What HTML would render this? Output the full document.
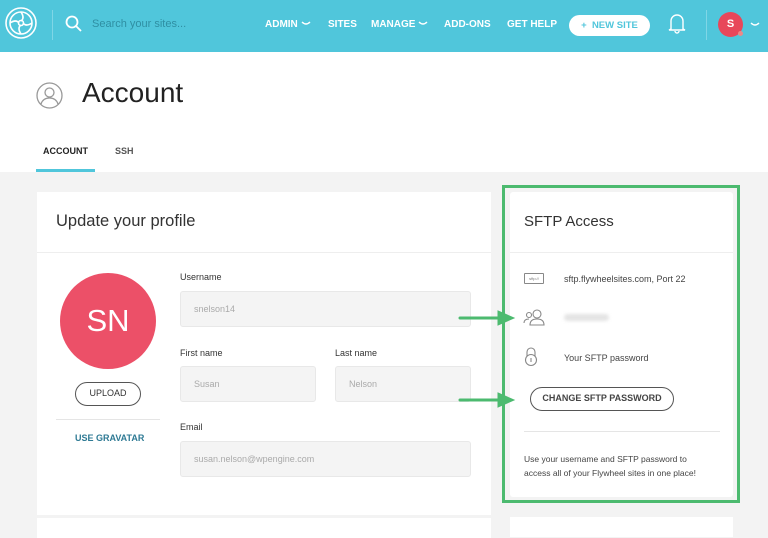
<!DOCTYPE html>
<html><head><meta charset="utf-8"><style>
*{box-sizing:border-box;margin:0;padding:0}
body{width:768px;height:527px;overflow:hidden;background:#f3f3f3;font-family:"Liberation Sans",sans-serif;position:relative;color:#333}
.a{position:absolute}
.hdr{left:0;top:0;width:768px;height:52px;background:#50c6db}
.nav{color:#fff;font-size:10px;font-weight:bold;top:19px;white-space:nowrap}
.nav svg{vertical-align:middle;margin-left:3px}
.lbl{font-size:9px;color:#333}
.in{background:#f4f4f4;border:1px solid #e8e8e8;border-radius:3px;font-size:9px;color:#aaa;padding-left:13px;display:flex;align-items:center}
</style></head><body>
<div class="a hdr"></div>
<svg class="a" style="left:3px;top:5px" width="36" height="36" viewBox="0 0 36 36" fill="none" stroke="#fff" stroke-width="1.6"><circle cx="18" cy="18" r="15"/><circle cx="18" cy="18" r="11"/><circle cx="18" cy="18" r="2.5"/><path d="M18 7q4 6 0 9M29 18q-6 4-9 0M18 29q-4-6 0-9M7 18q6-4 9 0"/></svg>
<div class="a" style="left:52px;top:10px;width:1px;height:30px;background:#7fd6e6"></div>
<svg class="a" style="left:65px;top:15px" width="17" height="17" viewBox="0 0 17 17" fill="none" stroke="#fff" stroke-width="1.8"><circle cx="7" cy="7" r="5.5"/><path d="M11 11l5 5"/></svg>
<div class="a" style="left:92px;top:18px;font-size:11px;color:#2f8fa3">Search your sites...</div>
<div class="a nav" style="left:265px">ADMIN<svg width="10" height="6" viewBox="0 0 10 6" fill="none" stroke="#fff" stroke-width="1.4"><path d="M1 1q4 4 8 0"/></svg></div>
<div class="a nav" style="left:328px">SITES</div>
<div class="a nav" style="left:371px">MANAGE<svg width="10" height="6" viewBox="0 0 10 6" fill="none" stroke="#fff" stroke-width="1.4"><path d="M1 1q4 4 8 0"/></svg></div>
<div class="a nav" style="left:444px">ADD-ONS</div>
<div class="a nav" style="left:507px">GET HELP</div>
<div class="a" style="left:569px;top:15px;width:81px;height:21px;background:#fff;border-radius:11px;color:#50c6db;font-size:9.5px;font-weight:bold;text-align:center;line-height:21px">+&nbsp; NEW SITE</div>
<svg class="a" style="left:668px;top:12px" width="18" height="22" viewBox="0 0 18 22" fill="none" stroke="#fff" stroke-width="1.4"><path d="M3 17V9a6 6 0 0 1 12 0v8l2 1H1z M7 19a2 2 0 0 0 4 0"/></svg>
<div class="a" style="left:706px;top:10px;width:1px;height:30px;background:#7fd6e6"></div>
<div class="a" style="left:718px;top:12px;width:25px;height:25px;border-radius:50%;background:#e8475a;color:#fff;font-size:11px;font-weight:bold;text-align:center;line-height:25px">S</div>
<div class="a" style="left:738px;top:31px;width:5px;height:5px;border-radius:50%;background:#e88;"></div>
<svg class="a" style="left:750px;top:22px" width="10" height="6" viewBox="0 0 10 6" fill="none" stroke="#fff" stroke-width="1.4"><path d="M1 1q4 4 8 0"/></svg>

<div class="a" style="left:0;top:52px;width:768px;height:120px;background:#fff"></div>
<svg class="a" style="left:36px;top:82px" width="27" height="27" viewBox="0 0 27 27" fill="none" stroke="#999" stroke-width="1.3"><circle cx="13.5" cy="13.5" r="12.5"/><circle cx="13.5" cy="10.5" r="4.5"/><path d="M5 22q2-6 8.5-6t8.5 6"/></svg>
<div class="a" style="left:82px;top:77px;font-size:28px;color:#222">Account</div>
<div class="a" style="left:43px;top:146px;font-size:9px;font-weight:bold;color:#222">ACCOUNT</div>
<div class="a" style="left:115px;top:146px;font-size:9px;font-weight:bold;color:#555">SSH</div>
<div class="a" style="left:36px;top:169px;width:59px;height:3px;background:#50c6db"></div>

<div class="a" style="left:37px;top:192px;width:454px;height:323px;background:#fff"></div>
<div class="a" style="left:37px;top:518px;width:454px;height:20px;background:#fff"></div>
<div class="a" style="left:56px;top:212px;font-size:16.5px;color:#333">Update your profile</div>
<div class="a" style="left:37px;top:252px;width:454px;height:1px;background:#eee"></div>
<div class="a" style="left:60px;top:273px;width:96px;height:96px;border-radius:50%;background:#ec5068;color:#fff;font-size:31px;text-align:center;line-height:96px">SN</div>
<div class="a" style="left:75px;top:382px;width:66px;height:24px;border:1.5px solid #555;border-radius:12px;font-size:9px;text-align:center;line-height:21px;color:#333">UPLOAD</div>
<div class="a" style="left:56px;top:419px;width:104px;height:1px;background:#e5e5e5"></div>
<div class="a" style="left:75px;top:433px;font-size:9px;font-weight:bold;color:#2e7a94">USE GRAVATAR</div>
<div class="a lbl" style="left:180px;top:272px">Username</div>
<div class="a in" style="left:180px;top:291px;width:291px;height:36px">snelson14</div>
<div class="a lbl" style="left:180px;top:348px">First name</div>
<div class="a in" style="left:180px;top:366px;width:136px;height:36px">Susan</div>
<div class="a lbl" style="left:335px;top:348px">Last name</div>
<div class="a in" style="left:335px;top:366px;width:136px;height:36px">Nelson</div>
<div class="a lbl" style="left:180px;top:422px">Email</div>
<div class="a in" style="left:180px;top:441px;width:291px;height:36px">susan.nelson@wpengine.com</div>

<div class="a" style="left:510px;top:192px;width:223px;height:305px;background:#fff;border-radius:3px"></div>
<div class="a" style="left:510px;top:517px;width:223px;height:20px;background:#fff"></div>
<div class="a" style="left:502px;top:185px;width:238px;height:318px;border:3px solid #4cba6f"></div>
<div class="a" style="left:524px;top:213px;font-size:15px;color:#333">SFTP Access</div>
<div class="a" style="left:510px;top:252px;width:223px;height:1px;background:#eee"></div>
<div class="a" style="left:524px;top:273px;width:20px;height:11px;border:1px solid #888;border-radius:1px;font-size:4px;text-align:center;line-height:9px;color:#777">sftp://</div>
<div class="a" style="left:564px;top:274px;font-size:9px;color:#444">sftp.flywheelsites.com, Port 22</div>
<svg class="a" style="left:523px;top:308px" width="22" height="18" viewBox="0 0 22 18" fill="none" stroke="#888" stroke-width="1.1"><circle cx="14" cy="6" r="4"/><path d="M7 17q0-6 7-6t7 6z"/><circle cx="6" cy="7" r="2.5"/><path d="M1 15q0-4 5-4"/></svg>
<div class="a" style="left:564px;top:314px;width:45px;height:7px;background:#e4e4e4;border-radius:4px;filter:blur(1.5px)"></div>
<svg class="a" style="left:524px;top:347px" width="14" height="20" viewBox="0 0 14 20" fill="none" stroke="#888" stroke-width="1.1"><path d="M3 9V5a4 4 0 0 1 8 0v4"/><circle cx="7" cy="13" r="5.5"/><path d="M7 11v4"/></svg>
<div class="a" style="left:564px;top:353px;font-size:9px;color:#444">Your SFTP password</div>
<div class="a" style="left:530px;top:387px;width:144px;height:24px;border:1.5px solid #555;border-radius:12px;font-size:9px;font-weight:bold;text-align:center;line-height:21px;color:#444">CHANGE SFTP PASSWORD</div>
<div class="a" style="left:524px;top:431px;width:196px;height:1px;background:#e5e5e5"></div>
<div class="a" style="left:524px;top:452px;font-size:8.5px;line-height:14px;color:#444">Use your username and SFTP password to<br>access all of your Flywheel sites in one place!</div>

<svg class="a" style="left:458px;top:309px" width="60" height="100" viewBox="0 0 60 100" fill="#4cba6f" stroke="#4cba6f"><path d="M2 9h42" stroke-width="3" stroke-linecap="round"/><path d="M40 2l16 7-16 7z"/><path d="M2 91h42" stroke-width="3" stroke-linecap="round"/><path d="M40 84l16 7-16 7z"/></svg>
</body></html>
